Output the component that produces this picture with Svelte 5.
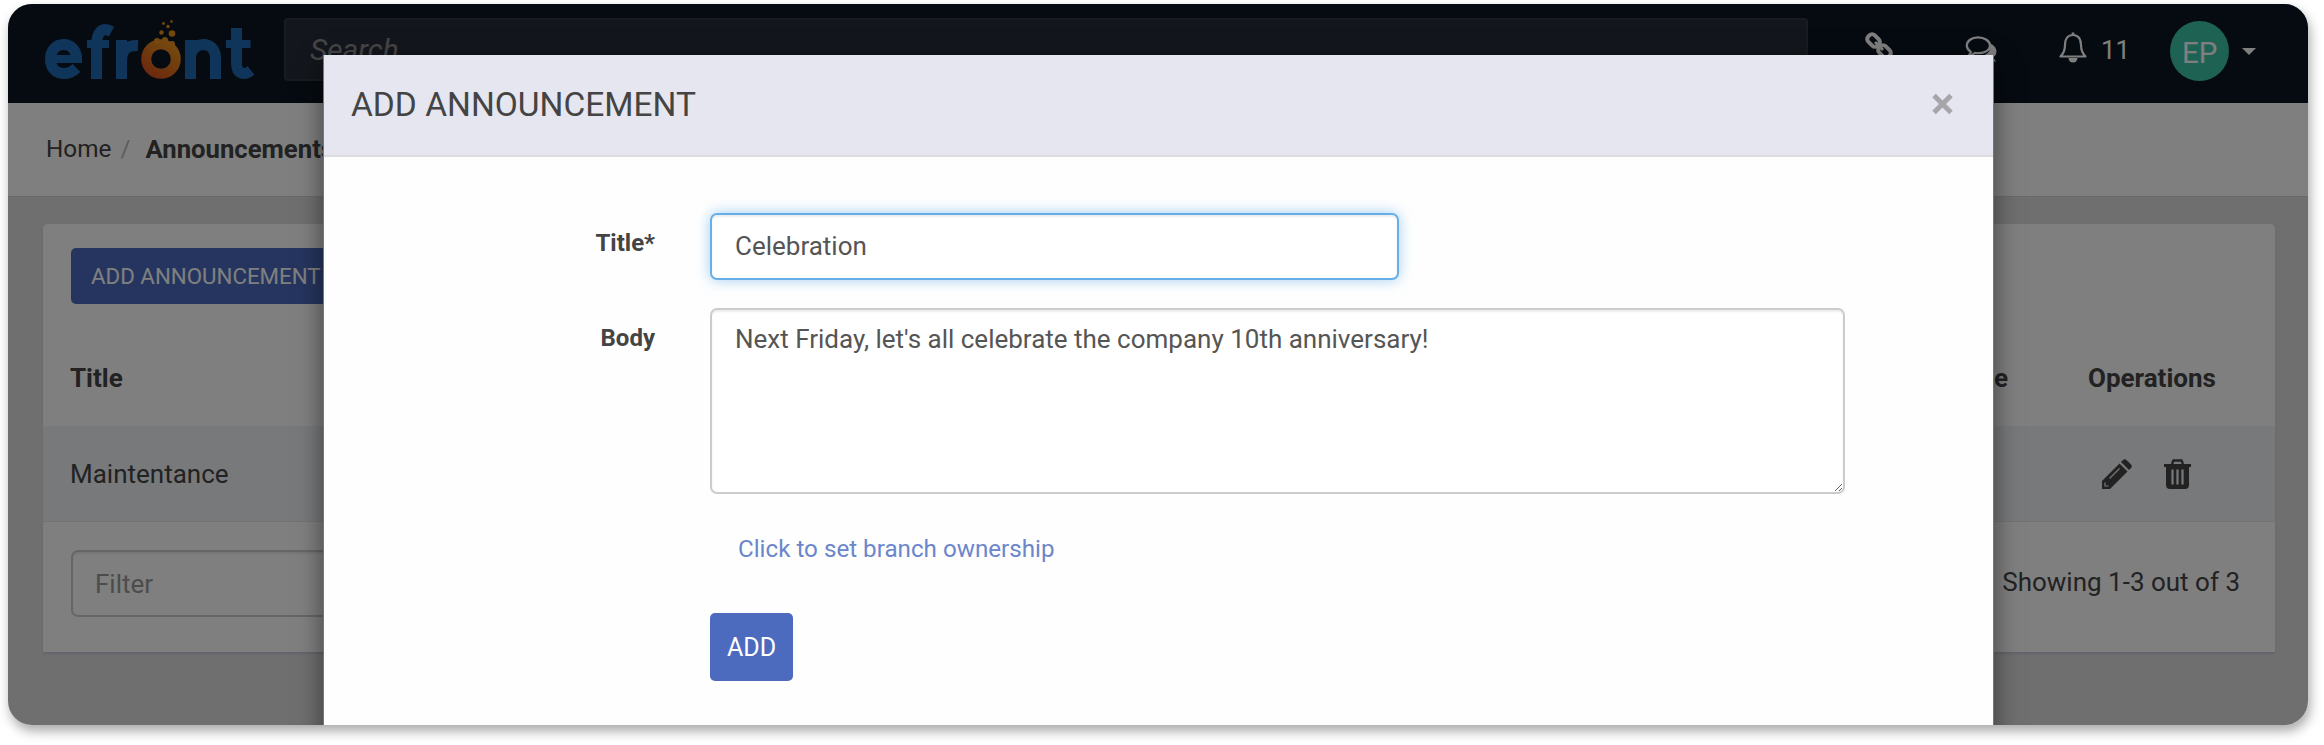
<script lang="ts">
  let search = $state('')
  let filter = $state('')
  let title = $state('Celebration')
  let body = $state("Next Friday, let's all celebrate the company 10th anniversary!")
  let open = $state(true)

  const announcements = [{ title: 'Maintentance' }]
</script>

<div class="desk">
<div class="window">
  <div class="page">
    <header>
      <svg class="logo" viewBox="0 0 212 64" width="212" height="64">
        <defs>
          <linearGradient id="flame" x1="0" y1="1" x2="0.7" y2="0">
            <stop offset="0" stop-color="#d8501e" />
            <stop offset="1" stop-color="#e8901d" />
          </linearGradient>
        </defs>
        <g fill="none" stroke="#206bb6" stroke-width="11">
          <path d="M32.500 39C32.500 30 27 24.500 19.500 24.500C11.500 24.500 6.500 31 6.500 39C6.500 48 11.500 53.500 20 53.500C25.500 53.500 29 51.500 32.500 48" />
          <path d="M6 39H38" stroke-width="8" />
          <path d="M52.500 59V26C52.500 12 58 6.500 67.500 11.500" />
          <path d="M77.500 59V20M77.500 42C77.500 29 83 25 94 25.500" />
          <path d="M146.500 59V20M146.500 38C146.500 21 171.500 19 171.500 38V59" />
          <path d="M192.500 8V43C192.500 54 200 56 207 50.500" />
          <path d="M43 24H65M182 24H206.500" stroke-width="8" />
        </g>
        <circle cx="117" cy="39" r="14.800" fill="none" stroke="url(#flame)" stroke-width="10" />
        <g fill="#e8901d">
          <circle cx="113" cy="21" r="3" /><circle cx="121" cy="20" r="3" /><circle cx="128" cy="24" r="3" />
          <circle cx="128" cy="13.500" r="3.300" /><circle cx="117.500" cy="12.500" r="2.200" />
          <circle cx="124" cy="6.500" r="1.700" /><circle cx="119.500" cy="3.500" r="1.400" /><circle cx="127.500" cy="1.500" r="1.300" />
        </g>
      </svg>
      <input class="search" placeholder="Search" bind:value={search} />
      <nav>
        <svg class="link-icon" viewBox="0 0 28 28" width="28" height="28" fill="none" stroke="#fff" stroke-width="4">
          <rect x="-6.500" y="-4.500" width="13" height="9" rx="3.500" transform="translate(8.500 8.500) rotate(45)" />
          <rect x="-6.500" y="-4.500" width="13" height="9" rx="3.500" transform="translate(19.500 19.500) rotate(45)" />
          <path d="M10 10l8 8" stroke-width="3" />
        </svg>
        <svg class="chat-icon" viewBox="0 0 32 28" width="32" height="28">
          <path d="M25 7.500c8 3 8 11 3 14l3 4c-5 0-8-2-9-3-4 1-8 0-10-2 9 0 15-5 13-13z" fill="#fff" />
          <path d="M13 1.300C6.500 1.300 1.800 5 1.800 9.500c0 3 2 5 4 6.500l-2 4c3-1 5-2 6-3 8 1 15.200-2 15.200-7.500 0-4.500-5.500-8.200-12-8.200z" fill="#0d1722" stroke="#fff" stroke-width="2.300" />
        </svg>
        <span class="bell">
          <svg viewBox="0 0 28 32" width="28" height="32">
            <path d="M14 3C8 3 6 8 6 13c0 6-2 9-4.500 11.500h25C24 22 22 19 22 13c0-5-2-10-8-10z" fill="none" stroke="#fff" stroke-width="2.200" stroke-linejoin="round" />
            <path d="M14 .5v3" stroke="#fff" stroke-width="2.600" />
            <path d="M9.500 26h9a4.500 4.500 0 0 1-9 0z" fill="#fff" />
          </svg>
          11
        </span>
        <span class="avatar">EP</span>
        <span class="caret"></span>
      </nav>
    </header>

    <div class="breadcrumb">
      <a href="#home">Home</a><span class="slash">/</span><b>Announcements</b>
    </div>

    <main>
      <section class="card">
        <button class="btn new" onclick={() => (open = true)}>ADD ANNOUNCEMENT</button>
        <div class="row head">
          <span>Title</span><span class="date">Date</span><span class="ops">Operations</span>
        </div>
        {#each announcements as item}
          <div class="row item">
            <span>{item.title}</span>
            <span class="ops icons">
              <svg viewBox="0 0 30 30" width="30" height="30">
                <path d="M0 30v-8L17.500 4.500l8 8L8 30z" fill="#444" />
                <path d="M19 3l2-2q1.700-1.500 3.500 0l4.500 4.500q1.500 1.700 0 3.500l-2 2z" fill="#444" />
                <path d="M3 23.500v3.500h3.500M7.500 19.500L17.500 9.500" fill="none" stroke="#eff2f7" stroke-width="1.200" />
              </svg>
              <svg viewBox="0 0 27 30" width="27" height="30">
                <path d="M0 5h27v3H0zM2 8h23v18q0 4-4 4H6q-4 0-4-4z" fill="#444" />
                <path d="M8 5l1.500-3.500h8L19 5" fill="none" stroke="#444" stroke-width="2.400" />
                <path d="M8.500 10.500v15M13.500 10.500v15M18.500 10.500v15" stroke="#eff2f7" stroke-width="2.200" />
              </svg>
            </span>
          </div>
        {/each}
        <div class="foot">
          <input class="field filter" placeholder="Filter" bind:value={filter} />
          <span>Showing 1-3 out of 3</span>
        </div>
      </section>
    </main>
  </div>

  {#if open}
    <div class="backdrop"></div>
    <div class="modal">
      <div class="modal-head">
        <h3>ADD ANNOUNCEMENT</h3>
        <button class="close" aria-label="Close" onclick={() => (open = false)}>
          <svg viewBox="0 0 21 22" width="21" height="22"><path d="M2 2.500l17 17M19 2.500L2 19.500" stroke="#a5a5aa" stroke-width="5" /></svg>
        </button>
      </div>
      <form onsubmit={(e) => e.preventDefault()}>
        <label for="title">Title*</label>
        <input id="title" class="field title" bind:value={title} />
        <label for="body">Body</label>
        <textarea id="body" class="field body" bind:value={body}></textarea>
        <a class="branch" href="#branch">Click to set branch ownership</a>
        <button class="btn add">ADD</button>
      </form>
    </div>
  {/if}
</div>
</div>

<style>
  :global(body) {
    background: #fff;
    font-family: Roboto, 'Liberation Sans', sans-serif;
    font-size: 26px;
    color: #444;
  }
  * { box-sizing: border-box; }
  input, textarea, button { font: inherit; margin: 0; }
  a { color: inherit; text-decoration: none; }

  .desk {
    height: 745px;
    padding: 4px 16px 20px 8px;
    overflow: hidden;
    background: #fff;
  }
  .window {
    position: relative;
    height: 721px;
    border-radius: 24px;
    overflow: hidden;
    box-shadow: 2px 6px 12px rgba(0, 0, 0, .34);
  }
  .page { height: 100%; background: #dedede; }

  header {
    display: flex;
    align-items: flex-start;
    height: 99px;
    background: #0d1722;
  }
  .logo { flex: none; margin: 16px 0 0 36px; }
  .search {
    width: 1524px;
    height: 63px;
    margin: 14px 0 0 28px;
    padding: 0 24px;
    border: 2px solid #303642;
    border-radius: 4px;
    background: #272d38;
    color: #999;
    font-size: 29.8px;
    font-style: italic;
  }
  .search::placeholder { color: #8d8d8d; }
  nav { display: flex; align-items: flex-start; color: #fff; }
  .link-icon { margin: 28px 0 0 57px; }
  .chat-icon { margin: 32px 0 0 72px; }
  .bell { display: flex; gap: 14px; margin: 28px 0 0 62px; line-height: 36px; }
  .avatar {
    width: 59px;
    height: 60px;
    margin: 17px 0 0 40px;
    border-radius: 50%;
    background: #3bc5a7;
    font-size: 29.5px;
    line-height: 64px;
    text-align: center;
  }
  .caret {
    margin: 44px 0 0 13px;
    border: 7px solid transparent;
    border-top-color: #fff;
    border-bottom: 0;
  }

  .breadcrumb {
    display: flex;
    align-items: center;
    height: 94px;
    padding: 0 38px 2px;
    background: #fff;
    border-bottom: 1px solid #d5d5d5;
    font-size: 24.3px;
  }
  .slash { margin: 0 15px 0 9px; color: #bbb; }
  b { font-size: 25.7px; font-weight: 700; }

  main { padding: 27px 33px 0 35px; }
  .card {
    height: 428px;
    background: #fff;
    border-radius: 5px 5px 0 0;
    box-shadow: 0 2px 2px #c7cad8;
  }
  .btn {
    border: 0;
    border-radius: 5px;
    background: #4c6bbf;
    color: #fff;
  }
  .new { display: block; height: 56px; margin-left: 28px; padding: 0 20px 1px; font-size: 22.3px; transform: translateY(24px); }
  .row { display: flex; align-items: center; padding: 0 28px 0 27px; }
  .row > span:first-child { flex: 1; }
  .head { height: 96px; margin-top: 50px; font-weight: 700; }
  .date { margin-right: 80px; }
  .item { height: 96px; background: #eff2f6; border-bottom: 1px solid #e3e8ee; }
  .ops { width: 159px; }
  .icons { display: flex; gap: 32px; padding-left: 14px; }
  .foot { display: flex; justify-content: space-between; padding: 28px 35px 0 28px; line-height: 65px; }

  .field {
    border: 2px solid #ccc;
    border-radius: 7px;
    padding: 0 23px;
    background: #fff;
    color: #555;
    box-shadow: inset 0 2px 2px rgba(0, 0, 0, .075);
    outline: 0;
  }
  .filter { width: 600px; height: 67px; padding-left: 22px; }
  .filter::placeholder { color: #999; }

  .backdrop { position: absolute; inset: 0; background: rgba(0, 0, 0, .5); }
  .modal {
    position: absolute;
    left: 315px;
    top: 51px;
    width: 1671px;
    height: 800px;
    background: #fefefe;
    border: 1px solid #777;
    border-top: 0;
    box-shadow: 0 8px 24px rgba(0, 0, 0, .5);
  }
  .modal-head {
    display: flex;
    justify-content: space-between;
    align-items: center;
    height: 102px;
    padding: 0 40px 2px 27px;
    background: #e6e6f0;
    border-bottom: 2px solid #dcdce0;
  }
  h3 { margin: 0; font-size: 33.5px; font-weight: 400; }
  .close { display: flex; padding: 0; border: 0; background: none; }

  form {
    display: grid;
    grid-template-columns: 331px 1135px;
    column-gap: 55px;
    justify-items: start;
    padding-top: 56px;
  }
  label { justify-self: end; padding-top: 15px; font-size: 24px; font-weight: 700; line-height: 30px; }
  .title {
    width: 689px;
    height: 67px;
    padding-bottom: 2px;
    border-color: #66afe9;
    box-shadow: inset 0 2px 2px rgba(0, 0, 0, .075), 0 0 14px rgba(102, 175, 233, .6);
  }
  .body { width: 1135px; height: 186px; margin-top: 28px; padding-top: 13px; line-height: 32px; }
  label[for='body'] { margin-top: 28px; }
  .branch { grid-column: 2; margin: 39px 0 0 28px; font-size: 24.2px; line-height: 32px; color: #6b86cb; }
  .add { grid-column: 2; width: 83px; height: 68px; margin-top: 48px; padding: 0; font-size: 25px; }
</style>
